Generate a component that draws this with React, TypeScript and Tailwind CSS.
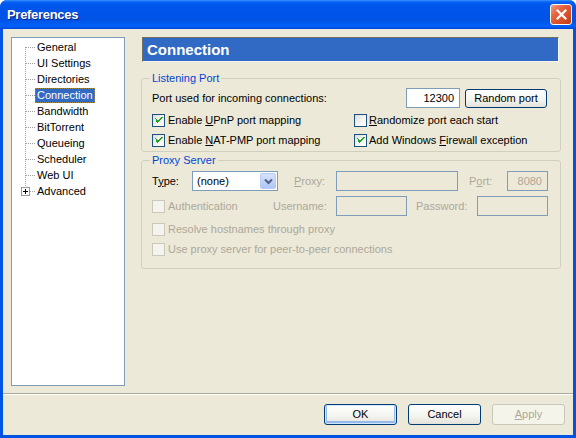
import React from "react";

function Check({ checked, disabled }: { checked?: boolean; disabled?: boolean }) {
  return (
    <span
      className={
        disabled
          ? "flex h-[13px] w-[13px] shrink-0 items-center justify-center border border-[#CAC8BB] bg-[#F4F3EE]"
          : "flex h-[13px] w-[13px] shrink-0 items-center justify-center border border-[#1C5180] bg-[linear-gradient(135deg,#DCDCD7_0%,#F6F6F3_60%,#FFFFFF_100%)]"
      }
    >
      {checked && (
        <svg width="9" height="9" viewBox="0 0 9 9" shapeRendering="crispEdges">
          <path d="M1 3h1v3h1v1h1v-1h1v-1h1v-1h1v-1h1v-2h-1v1h-1v1h-1v1h-1v1h-1v-1h-1v-1h-1z" fill="#21A121" />
          <path d="M1 2h1v1h1v1h1v1h1v-1h1v-1h1v-1h1v-1h1v1h-1v1h-1v1h-1v1h-1v1h-1v-1h-1v-1h-1v-1h-1z" fill="#21A121" />
        </svg>
      )}
    </span>
  );
}

function XPButton({
  children,
  className,
  isDefault,
  disabled,
}: {
  children: React.ReactNode;
  className: string;
  isDefault?: boolean;
  disabled?: boolean;
}) {
  const base = disabled
    ? "flex items-center justify-center rounded-[3px] border border-[#C9C7BA] bg-[#F5F4EA] text-[#ACA899]"
    : isDefault
    ? "flex items-center justify-center rounded-[3px] border border-[#003C74] bg-[linear-gradient(to_bottom,#FFFFFF_0%,#F3F3EF_60%,#E3E2DA_100%)] text-black shadow-[inset_0_0_0_1px_#CEE7FF,inset_0_-1px_0_2px_#98B8EA]"
    : "flex items-center justify-center rounded-[3px] border border-[#003C74] bg-[linear-gradient(to_bottom,#FFFFFF_0%,#F3F3EF_60%,#E3E2DA_100%)] text-black";
  return <div className={base + " " + className}>{children}</div>;
}

const treeItems = [
  "General",
  "UI Settings",
  "Directories",
  "Connection",
  "Bandwidth",
  "BitTorrent",
  "Queueing",
  "Scheduler",
  "Web UI",
  "Advanced",
];

function TreeRow({ label, index }: { label: string; index: number }) {
  const last = index === treeItems.length - 1;
  const selected = label === "Connection";
  return (
    <div className="flex h-[16px] items-center">
      <svg width="23" height="16" viewBox="0 0 23 16" shapeRendering="crispEdges" className="shrink-0">
        <line
          x1="13.5"
          y1={index === 0 ? 8 : 0}
          x2="13.5"
          y2={last ? 4 : 16}
          stroke="#A0A0A0"
          strokeDasharray="1 1"
        />
        <line x1={last ? 18 : 14} y1="8.5" x2="23" y2="8.5" stroke="#A0A0A0" strokeDasharray="1 1" />
        {last && (
          <g>
            <rect x="9.5" y="4.5" width="8" height="8" fill="#FFFFFF" stroke="#919B9C" />
            <line x1="11" y1="8.5" x2="16" y2="8.5" stroke="#000000" />
            <line x1="13.5" y1="6" x2="13.5" y2="11" stroke="#000000" />
          </g>
        )}
      </svg>
      <span
        className={
          selected
            ? "flex h-[15px] items-center border border-dotted border-[#A08A40] bg-[#316AC5] px-[1px] leading-[13px] text-white"
            : "flex h-[15px] items-center px-[2px] leading-[13px] text-black"
        }
      >
        {label}
      </span>
    </div>
  );
}

function TextBox({
  className,
  disabled,
  children,
}: {
  className: string;
  disabled?: boolean;
  children?: React.ReactNode;
}) {
  return (
    <div
      className={
        (disabled
          ? "flex h-[20px] items-center justify-end border border-[#7F9DB9] bg-[#ECE9D8] pr-[5px] text-[#ACA899] "
          : "flex h-[20px] items-center justify-end border border-[#7F9DB9] bg-white pr-[5px] text-black ") + className
      }
    >
      {children}
    </div>
  );
}

export default function App() {
  return (
    <div className="h-[438px] w-[576px] overflow-hidden bg-white font-['Liberation_Sans',Arial,sans-serif] text-[11px] leading-[13px]">
      <div className="flex h-full w-full flex-col overflow-hidden rounded-t-[7px] bg-[#0054E3]">
        {/* Title bar */}
        <div className="flex h-[29px] shrink-0 items-center bg-[linear-gradient(to_bottom,#3D95FF_0%,#0A66F5_6%,#0058EE_14%,#0053E8_45%,#0054E6_70%,#0060F8_88%,#0057EC_96%,#003DD0_100%)] pl-[7px] pr-[4px]">
          <span className="text-[13px] font-bold tracking-[-0.3px] text-white [text-shadow:1px_1px_0_#0A1F80]">
            Preferences
          </span>
          <div className="ml-auto flex h-[21px] w-[22px] items-center justify-center rounded-[3px] border border-white bg-[linear-gradient(135deg,#F0A088_0%,#E5633F_35%,#D24A22_75%,#C23A14_100%)]">
            <svg width="11" height="11" viewBox="0 0 11 11">
              <path d="M1.5 1.5 L9.5 9.5 M9.5 1.5 L1.5 9.5" stroke="#FFFFFF" strokeWidth="2.2" strokeLinecap="square" />
            </svg>
          </div>
        </div>

        {/* Client area with frame */}
        <div className="flex flex-1 flex-col px-[3px] pb-[3px]">
          <div className="flex flex-1 flex-col bg-[#ECE9D8]">
            <div className="flex pl-[8px] pt-[8px]">
              {/* Tree */}
              <div className="h-[349px] w-[114px] shrink-0 border border-[#7F9DB9] bg-white pt-[1px]">
                {treeItems.map((t, i) => (
                  <TreeRow key={t} label={t} index={i} />
                ))}
              </div>

              {/* Right panel */}
              <div className="ml-[16px] flex w-[420px] flex-col">
                <div className="ml-[1px] mr-[2px] flex h-[25px] items-center border border-b-[#F4F3EE] border-l-[#716F64] border-r-[#F4F3EE] border-t-[#716F64] bg-[#316AC5] pl-[4px] text-[15px] font-bold text-white">
                  Connection
                </div>

                {/* Listening Port */}
                <div className="relative mt-[16px] h-[74px] rounded-[3px] border border-[#D0D0BF] pl-[10px] pr-[13px] pt-[9px]">
                  <span className="absolute left-[8px] top-[-7px] bg-[#ECE9D8] px-[2px] leading-[13px] text-[#0046D5]">
                    Listening Port
                  </span>
                  <div className="flex h-[20px] items-center">
                    <span>Port used for incoming connections:</span>
                    <TextBox className="ml-auto w-[54px]">12300</TextBox>
                    <XPButton className="ml-[5px] h-[19px] w-[82px]">Random port</XPButton>
                  </div>
                  <div className="mt-[2px] grid grid-cols-[202px_1fr]">
                    <div className="flex h-[20px] items-center gap-[3px]">
                      <Check checked />
                      <span>
                        Enable <u>U</u>PnP port mapping
                      </span>
                    </div>
                    <div className="flex h-[20px] items-center gap-[2px]">
                      <Check />
                      <span>
                        <u>R</u>andomize port each start
                      </span>
                    </div>
                    <div className="flex h-[20px] items-center gap-[3px]">
                      <Check checked />
                      <span>
                        Enable <u>N</u>AT-PMP port mapping
                      </span>
                    </div>
                    <div className="flex h-[20px] items-center gap-[2px]">
                      <Check checked />
                      <span>
                        Add Windows <u>F</u>irewall exception
                      </span>
                    </div>
                  </div>
                </div>

                {/* Proxy Server */}
                <div className="relative mt-[8px] h-[109px] rounded-[3px] border border-[#D0D0BF] pl-[10px] pt-[10px]">
                  <span className="absolute left-[8px] top-[-7px] bg-[#ECE9D8] px-[2px] leading-[13px] text-[#0046D5]">
                    Proxy Server
                  </span>
                  <div className="flex h-[20px] items-center">
                    <span className="w-[40px]">
                      T<u>y</u>pe:
                    </span>
                    <div className="flex h-[20px] w-[86px] items-center border border-[#7F9DB9] bg-white pl-[4px]">
                      <span className="flex-1">(none)</span>
                      <div className="mr-[1px] flex h-[16px] w-[16px] items-center justify-center rounded-[2px] border border-[#BACBF3] bg-[linear-gradient(to_bottom,#D6E2FD_0%,#C2D4FB_50%,#B1C6F7_100%)]">
                        <svg width="9" height="7" viewBox="0 0 9 7">
                          <path d="M1 1.5 L4.5 5 L8 1.5" stroke="#4D6185" strokeWidth="2" fill="none" />
                        </svg>
                      </div>
                    </div>
                    <span className="ml-[16px] w-[42px] text-[#ACA899]">
                      <u>P</u>roxy:
                    </span>
                    <TextBox disabled className="w-[122px]" />
                    <span className="ml-[11px] w-[38px] text-[#ACA899]">
                      P<u>o</u>rt:
                    </span>
                    <TextBox disabled className="w-[41px]">
                      8080
                    </TextBox>
                  </div>
                  <div className="mt-[5px] flex h-[20px] items-center text-[#ACA899]">
                    <div className="flex w-[121px] items-center gap-[3px]">
                      <Check disabled />
                      <span>Authentication</span>
                    </div>
                    <span className="w-[63px]">Username:</span>
                    <TextBox disabled className="w-[71px]" />
                    <span className="ml-[9px] w-[61px]">Password:</span>
                    <TextBox disabled className="w-[71px]" />
                  </div>
                  <div className="mt-[3px] flex h-[20px] items-center gap-[3px] text-[#ACA899]">
                    <Check disabled />
                    <span>Resolve hostnames through proxy</span>
                  </div>
                  <div className="flex h-[20px] items-center gap-[3px] text-[#ACA899]">
                    <Check disabled />
                    <span>Use proxy server for peer-to-peer connections</span>
                  </div>
                </div>
              </div>
            </div>

            {/* Separator */}
            <div className="mt-[7px] h-[2px] border-b border-t border-b-white border-t-[#ACA899]" />

            {/* Buttons */}
            <div className="mt-[9px] flex justify-end gap-[11px] pr-[8px]">
              <XPButton isDefault className="h-[21px] w-[73px]">
                OK
              </XPButton>
              <XPButton className="h-[21px] w-[73px]">Cancel</XPButton>
              <XPButton disabled className="h-[21px] w-[73px]">
                <span>
                  <u>A</u>pply
                </span>
              </XPButton>
            </div>
          </div>
        </div>
      </div>
    </div>
  );
}
